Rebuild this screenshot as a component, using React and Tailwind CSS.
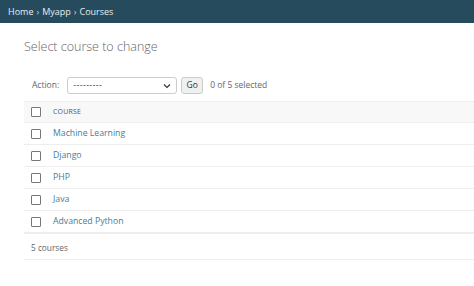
export default function App() {
  const rows = ["Machine Learning", "Django", "PHP", "Java", "Advanced Python"];
  const Box = () => (
    <span className="inline-block w-[10px] h-[10px] border border-[#777] rounded-[1px] bg-white" />
  );
  return (
    <div className="w-[474px] h-[286px] bg-white overflow-hidden" style={{ fontFamily: '"Open Sans", "Noto Sans", sans-serif' }}>
      <div className="h-[23px] bg-[#264b5d] flex items-center pl-[8px] text-[9px] text-[#e6eef2] leading-none">
        <span>Home</span>
        <span className="mx-[3px] text-[#c4dce8]">›</span>
        <span>Myapp</span>
        <span className="mx-[3px] text-[#c4dce8]">›</span>
        <span>Courses</span>
      </div>
      <div className="pl-[24px]">
        <h1 className="mt-[18px] text-[12.5px] font-light text-[#666] leading-none h-[16px]">Select course to change</h1>
        <div className="mt-[19px] flex items-center pl-[8px] h-[19px]">
          <span className="text-[8.5px] text-[#666]">Action:</span>
          <div className="ml-[8px] w-[110px] h-[17px] border border-[#ccc] rounded-[3px] flex items-center justify-between px-[5px]">
            <span className="text-[8.5px] text-[#333] tracking-[0.5px]">---------</span>
            <svg width="8" height="6" viewBox="0 0 8 6"><path d="M1 1.5 L4 4.5 L7 1.5" stroke="#333" strokeWidth="1.2" fill="none" /></svg>
          </div>
          <div className="ml-[4px] w-[22px] h-[17px] border border-[#ccc] rounded-[3px] bg-[#f0f0f0] flex items-center justify-center text-[8.5px] text-[#333]">Go</div>
          <span className="ml-[7px] text-[8.5px] text-[#666]">0 of 5 selected</span>
        </div>
        <div className="mt-[6px] h-[22px] bg-[#f8f8f8] border-t border-b border-[#eee] flex items-center pl-[7px]">
          <Box />
          <span className="ml-[12px] text-[7px] text-[#555] tracking-[0.2px]">COURSE</span>
        </div>
        {rows.map((r) => (
          <div key={r} className="h-[22px] border-b border-[#eee] flex items-center pl-[7px] pt-[1px]">
            <Box />
            <span className="ml-[12px] text-[8.7px] text-[#447e9b]">{r}</span>
          </div>
        ))}
        <div className="h-[27px] border-b border-[#eee] border-t flex items-center pl-[7px] pt-[3px]">
          <span className="text-[8.3px] text-[#666]">5 courses</span>
        </div>
      </div>
    </div>
  );
}
